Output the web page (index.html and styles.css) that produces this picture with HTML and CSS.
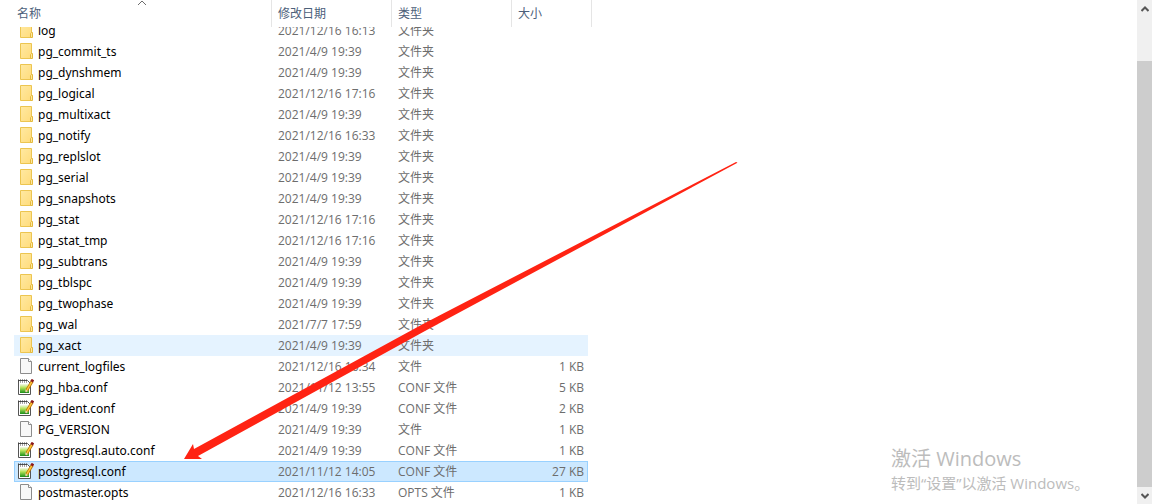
FILE: index.html
```html
<!DOCTYPE html>
<html lang="zh-CN">
<head>
  <meta charset="UTF-8">
  <title>data</title>
  <link rel="stylesheet" href="styles.css">
</head>
<body>
  <svg class="symbols" aria-hidden="true">
    <defs>
      <linearGradient id="folderFill" x1="0" y1="0" x2="1" y2="1">
        <stop offset="0" stop-color="#ffe9a2"/>
        <stop offset="1" stop-color="#ffdc7c"/>
      </linearGradient>
      <linearGradient id="noteFill" x1="0" y1="0" x2="0" y2="1">
        <stop offset="0" stop-color="#f4fbe8"/>
        <stop offset="0.4" stop-color="#b5e35c"/>
        <stop offset="1" stop-color="#189018"/>
      </linearGradient>
      <symbol id="folder" viewBox="0 0 16 16">
        <path d="M2.5 0.5h11v15h-11z" fill="url(#folderFill)" stroke="#ecc550"/>
        <path d="M12.5 15.5v-4l1-1h1v5z" fill="#ffe79a" stroke="#e3b93e"/>
      </symbol>
      <symbol id="file" viewBox="0 0 16 16">
        <path d="M2.5 0.5h8l3 3v12h-11z" fill="#f8f8f8" stroke="#8c8c8c"/>
        <path d="M10.5 0.5v3h3" fill="#fff" stroke="#8c8c8c"/>
      </symbol>
      <symbol id="note" viewBox="0 0 16 16">
        <path d="M0.5 1.5h9l3 3v11h-12z" fill="#fff" stroke="#555"/>
        <path d="M2 5h9v9h-9z" fill="url(#noteFill)"/>
        <path d="M0 1.5h10" stroke="#444" stroke-width="2" stroke-dasharray="1 1"/>
        <path d="M2 3.5h7" stroke="#aaa" stroke-dasharray="1 1"/>
        <path d="M14.2 2.2L8.8 11.2" stroke="#b96f00" stroke-width="3"/>
        <path d="M14 2.4L9 10.8" stroke="#ffc63b" stroke-width="1.5"/>
        <path d="M7.5 10.3l2.6 1.6-3 2z" fill="#eed7a5"/>
        <path d="M7.2 12.7v1.3l1.2-.7z" fill="#222"/>
        <path d="M13.6 2.8L15 .6" stroke="#8d1818" stroke-width="3"/>
      </symbol>
    </defs>
  </svg>

  <div id="explorer">
    <main id="list">
      <table>
        <thead>
          <tr>
            <th class="name">
              <button>名称</button>
              <svg class="sort" viewBox="0 0 10 6"><path d="M1 5l4-4 4 4"/></svg>
            </th>
            <th class="date"><button>修改日期</button></th>
            <th class="type"><button>类型</button></th>
            <th class="size"><button>大小</button></th>
          </tr>
        </thead>
        <tbody id="rows"></tbody>
      </table>
    </main>

    <div id="scrollbar">
      <button aria-label="向上滚动"><svg viewBox="0 0 8 6"><path d="M0.5 5L4 1.5 7.5 5"/></svg></button>
      <div class="thumb"></div>
      <button aria-label="向下滚动"><svg viewBox="0 0 8 6"><path d="M0.5 1L4 4.5 7.5 1"/></svg></button>
    </div>
  </div>

  <svg class="arrow" viewBox="0 0 556 300" aria-hidden="true">
    <path d="M1 299L10 284 11 289 240 164 553 2q2 0 1 1L242 171 15 296 19 299z"/>
  </svg>

  <div class="watermark">
    <p class="title">激活 Windows</p>
    <p>转到“设置”以激活 Windows。</p>
  </div>

  <script>
    const files = [
      ['folder', 'log', '2021/12/16 16:13', '文件夹', ''],
      ['folder', 'pg_commit_ts', '2021/4/9 19:39', '文件夹', ''],
      ['folder', 'pg_dynshmem', '2021/4/9 19:39', '文件夹', ''],
      ['folder', 'pg_logical', '2021/12/16 17:16', '文件夹', ''],
      ['folder', 'pg_multixact', '2021/4/9 19:39', '文件夹', ''],
      ['folder', 'pg_notify', '2021/12/16 16:33', '文件夹', ''],
      ['folder', 'pg_replslot', '2021/4/9 19:39', '文件夹', ''],
      ['folder', 'pg_serial', '2021/4/9 19:39', '文件夹', ''],
      ['folder', 'pg_snapshots', '2021/4/9 19:39', '文件夹', ''],
      ['folder', 'pg_stat', '2021/12/16 17:16', '文件夹', ''],
      ['folder', 'pg_stat_tmp', '2021/12/16 17:16', '文件夹', ''],
      ['folder', 'pg_subtrans', '2021/4/9 19:39', '文件夹', ''],
      ['folder', 'pg_tblspc', '2021/4/9 19:39', '文件夹', ''],
      ['folder', 'pg_twophase', '2021/4/9 19:39', '文件夹', ''],
      ['folder', 'pg_wal', '2021/7/7 17:59', '文件夹', ''],
      ['folder', 'pg_xact', '2021/4/9 19:39', '文件夹', '', 'hovered'],
      ['file', 'current_logfiles', '2021/12/16 16:34', '文件', '1 KB'],
      ['note', 'pg_hba.conf', '2021/11/12 13:55', 'CONF 文件', '5 KB'],
      ['note', 'pg_ident.conf', '2021/4/9 19:39', 'CONF 文件', '2 KB'],
      ['file', 'PG_VERSION', '2021/4/9 19:39', '文件', '1 KB'],
      ['note', 'postgresql.auto.conf', '2021/4/9 19:39', 'CONF 文件', '1 KB'],
      ['note', 'postgresql.conf', '2021/11/12 14:05', 'CONF 文件', '27 KB', 'selected'],
      ['file', 'postmaster.opts', '2021/12/16 16:33', 'OPTS 文件', '1 KB']
    ];

    document.getElementById('rows').innerHTML = files.map(([icon, name, date, type, size, state]) => `
      <tr class="${state || ''}">
        <td class="name"><div><svg class="icon"><use href="#${icon}"/></svg>${name}</div></td>
        <td>${date}</td>
        <td>${type}</td>
        <td class="size">${size}</td>
      </tr>`).join('');

    // the first row sits partly under the header
    document.getElementById('list').scrollTop = 7;
  </script>
</body>
</html>
```
FILE: styles.css
```css
body {
  margin: 0;
  background: #fff;
  color: #6d6d6d;
  font-family: "Open Sans", "Noto Sans CJK SC", sans-serif;
  font-size: 12px;
  overflow: hidden;
}

button {
  padding: 0;
  border: 0;
  background: none;
  color: inherit;
  font: inherit;
}

.symbols {
  position: absolute;
  width: 0;
  height: 0;
}

#explorer {
  display: flex;
  height: 100vh;
}

#list {
  flex: 1;
  overflow: hidden;
  padding: 0 0 8px 14px;
}

table {
  width: 574px;
  table-layout: fixed;
  border-collapse: separate;
  border-spacing: 0;
}

th {
  position: sticky;
  top: 0;
  z-index: 1;
  height: 27px;
  box-sizing: border-box;
  padding: 0 0 0 6px;
  border-right: 1px solid #e5e5e5;
  background: #fff;
  color: #4c607a;
  font-weight: normal;
  line-height: 26px;
  text-align: left;
}

th.name {
  width: 258px;
  padding-left: 3px;
}

th.date,
th.type {
  width: 120px;
}

th.size {
  border-right: 0;
}

th.size::after {
  content: "";
  position: absolute;
  top: 0;
  right: -4px;
  width: 1px;
  height: 27px;
  background: #e5e5e5;
}

.sort {
  position: absolute;
  top: 0;
  left: 50%;
  width: 10px;
  height: 6px;
  margin-left: -6px;
  fill: none;
  stroke: #6d6d6d;
}

td {
  height: 21px;
  padding: 0 0 0 6px;
  line-height: 20px;
  white-space: nowrap;
}

td.name {
  padding-left: 4px;
  color: #000;
  font-family: "Noto Sans", "Noto Sans CJK SC", sans-serif;
}

td.name div {
  display: flex;
  align-items: flex-start;
  gap: 4px;
}

td.size {
  padding-right: 4px;
  text-align: right;
}

.icon {
  width: 16px;
  height: 16px;
  margin-top: 1px;
}

.hovered {
  background: #e5f3ff;
}

.selected {
  background: #cce8ff;
  outline: 1px solid #99d1ff;
  outline-offset: -1px;
}

#scrollbar {
  display: flex;
  flex-direction: column;
  width: 15px;
  margin-right: 1px;
  background: #f0f0f0;
}

#scrollbar button {
  height: 17px;
  line-height: 0;
}

#scrollbar svg {
  width: 8px;
  height: 6px;
  fill: none;
  stroke: #555;
  stroke-width: 2;
}

.thumb {
  flex: 1;
  margin-top: 44px;
  background: #cdcdcd;
}

.arrow {
  position: absolute;
  top: 160px;
  left: 183px;
  z-index: 2;
  width: 556px;
  height: 300px;
  fill: #ff2313;
}

.watermark {
  position: absolute;
  right: 60px;
  bottom: 10px;
  width: 202px;
  color: #bcbcbc;
  font-size: 15px;
  line-height: 22px;
  white-space: nowrap;
}

.watermark p {
  margin: 0;
}

.watermark .title {
  font-size: 20px;
  line-height: 26px;
}
```
